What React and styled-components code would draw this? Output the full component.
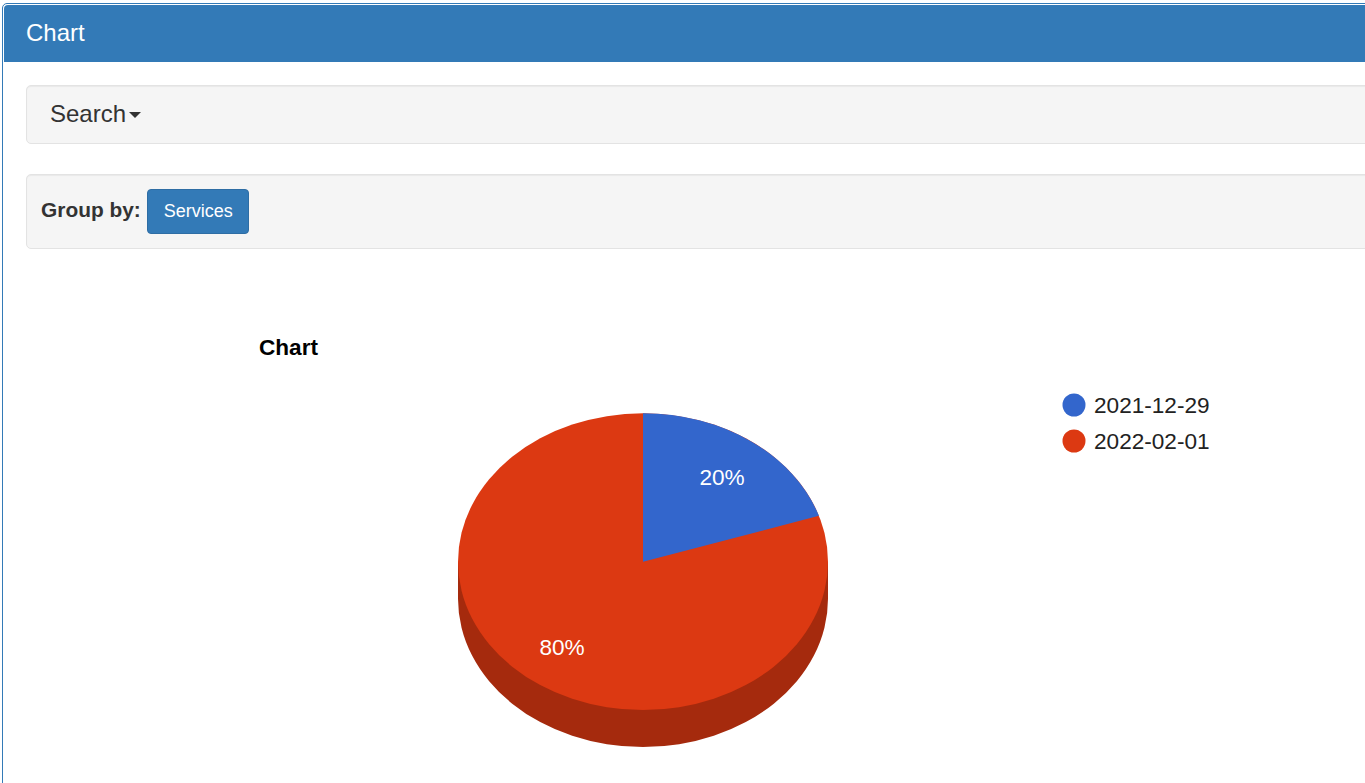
import React from "react";
import styled, { createGlobalStyle } from "styled-components";

const GlobalStyle = createGlobalStyle`
  html, body {
    margin: 0;
    height: 100%;
    overflow: hidden;
    background: #fff;
  }
  body {
    font-family: "Liberation Sans", Arial, sans-serif;
    color: #333;
  }
`;

const Page = styled.div`
  padding: 3px 0 0 2px;
  width: 1600px;
`;

const Panel = styled.div`
  border: 1px solid #337ab7;
  border-radius: 5px;
  padding: 1px;
  background: #fff;
  height: 900px;
  box-sizing: border-box;
`;

const PanelHeading = styled.div`
  background: #337ab7;
  color: #fff;
  font-size: 24px;
  line-height: 27px;
  height: 57px;
  padding: 14px 22px 0;
  box-sizing: border-box;
  border-radius: 4px 4px 0 0;
`;

const PanelBody = styled.div`
  padding: 23px 0 0 22px;
`;

const Well = styled.div`
  background: #f5f5f5;
  border: 1px solid #e3e3e3;
  border-radius: 5px;
  box-shadow: inset 0 1px 1px rgba(0, 0, 0, 0.05);
  box-sizing: border-box;
  display: flex;
  align-items: center;
  height: ${(p) => p.$height}px;
  padding-left: ${(p) => p.$pad}px;
  margin-bottom: ${(p) => p.$gap}px;
`;

const SearchToggle = styled.span`
  font-size: 24px;
  color: #333;
  display: flex;
  align-items: center;
  margin-bottom: 2px;
`;

const Caret = styled.span`
  width: 0;
  height: 0;
  margin-left: 3px;
  margin-top: 3px;
  border-top: 6px solid #333;
  border-left: 6px solid transparent;
  border-right: 6px solid transparent;
`;

const GroupLabel = styled.strong`
  font-size: 20.9px;
  color: #333;
  margin-right: 6px;
  margin-bottom: 4px;
`;

const GroupButton = styled.button`
  font-family: inherit;
  font-size: 18px;
  color: #fff;
  background: #337ab7;
  border: 1px solid #2e6da4;
  border-radius: 4px;
  width: 102px;
  height: 45px;
  padding: 0 0 0 1px;
`;

const ChartSvg = styled.svg`
  display: block;
  font-family: "Liberation Sans", Arial, sans-serif;
`;

// wedge edge at 72deg on the top ellipse
const cx = 617;
const cy = 281.7;
const rx = 185;
const ry = 148.4;
const depth = 37;
const endX = cx + rx * Math.sin((72 * Math.PI) / 180);
const endY = cy - ry * Math.cos((72 * Math.PI) / 180);

const legend = [
  { label: "2021-12-29", color: "#3366cc", y: 125 },
  { label: "2022-02-01", color: "#dc3912", y: 161 },
];

const PieChart = () => (
  <ChartSvg width="1338" height="500" viewBox="0 0 1338 500">
    <text x="233" y="75" fontSize="22.6" fontWeight="700" fill="#000">
      Chart
    </text>

    {/* side of the pie */}
    <path
      d={`M${cx - rx} ${cy} V${cy + depth} A${rx} ${ry} 0 0 0 ${cx + rx} ${cy + depth} V${cy} Z`}
      fill="#a52a0d"
    />
    <ellipse cx={cx} cy={cy} rx={rx} ry={ry} fill="#dc3912" />
    <path
      d={`M${cx} ${cy} V${cy - ry} A${rx} ${ry} 0 0 1 ${endX} ${endY} Z`}
      fill="#3366cc"
    />
    <text x="696" y="205" fontSize="22.6" fill="#fff" textAnchor="middle">
      20%
    </text>
    <text x="536" y="375" fontSize="22.6" fill="#fff" textAnchor="middle">
      80%
    </text>

    {legend.map((item) => (
      <g key={item.label}>
        <circle cx="1048" cy={item.y} r="11.5" fill={item.color} />
        <text x="1068" y={item.y + 8} fontSize="22.6" fill="#222">
          {item.label}
        </text>
      </g>
    ))}
  </ChartSvg>
);

export default function App() {
  return (
    <Page>
      <GlobalStyle />
      <Panel>
        <PanelHeading>Chart</PanelHeading>
        <PanelBody>
          <Well $height={59} $pad={23} $gap={30}>
            <SearchToggle>
              Search
              <Caret />
            </SearchToggle>
          </Well>
          <Well $height={75} $pad={14} $gap={31}>
            <GroupLabel>Group by:</GroupLabel>
            <GroupButton>Services</GroupButton>
          </Well>
          <PieChart />
        </PanelBody>
      </Panel>
    </Page>
  );
}
